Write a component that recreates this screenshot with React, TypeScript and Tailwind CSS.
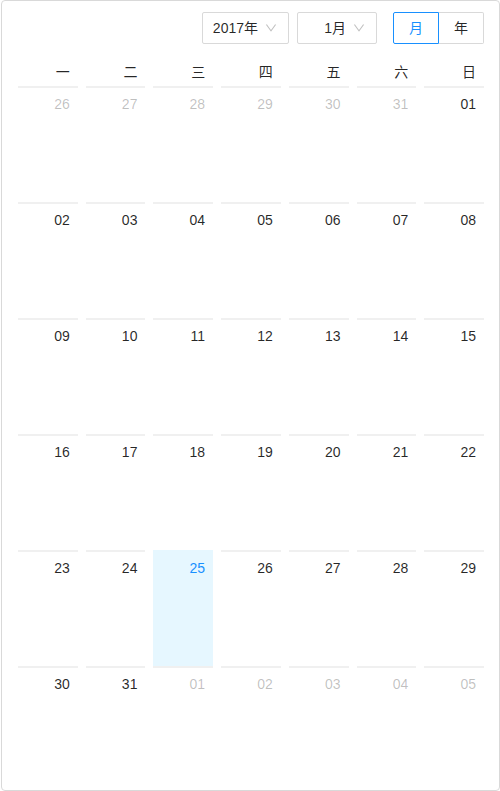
import React from 'react';

const weekdays = ['一', '二', '三', '四', '五', '六', '日'];

type Day = { label: string; inMonth: boolean; selected?: boolean };

function buildDays(): Day[] {
  const days: Day[] = [];
  for (let d = 26; d <= 31; d++) days.push({ label: String(d), inMonth: false });
  for (let d = 1; d <= 31; d++)
    days.push({ label: String(d).padStart(2, '0'), inMonth: true, selected: d === 25 });
  for (let d = 1; d <= 5; d++) days.push({ label: String(d).padStart(2, '0'), inMonth: false });
  return days;
}

function Chevron() {
  return (
    <svg viewBox="64 64 896 896" className="w-3 h-3" fill="rgba(0,0,0,0.25)">
      <path d="M884 256h-75c-5.1 0-9.9 2.5-12.9 6.6L512 654.2 227.9 262.6c-3-4.1-7.8-6.6-12.9-6.6h-75c-6.5 0-10.3 7.4-6.5 12.7l352.6 486.1c12.8 17.6 39 17.6 51.7 0l352.6-486.1c3.9-5.3.1-12.7-6.4-12.7z" />
    </svg>
  );
}

function Select({ value, width }: { value: string; width: string }) {
  return (
    <div
      className={`${width} h-8 border border-[#d9d9d9] rounded-[2px] bg-white flex items-center justify-end gap-[7px] pr-[11px] text-[14px] text-[rgba(0,0,0,0.85)]`}
    >
      <span>{value}</span>
      <Chevron />
    </div>
  );
}

export default function App() {
  const days = buildDays();
  const rows = [0, 1, 2, 3, 4, 5].map((r) => days.slice(r * 7, r * 7 + 7));

  return (
    <div
      className="ml-px w-[499px] h-[791px] border border-[#d9d9d9] rounded-[4px] bg-white"
      style={{ fontFamily: '"Liberation Sans", "Noto Sans CJK SC", sans-serif' }}
    >
      {/* Header */}
      <div className="flex justify-end items-center pt-[11px] pb-[11px] pr-[15px]">
        <Select value="2017年" width="w-[87px]" />
        <div className="ml-2">
          <Select value="1月" width="w-[80px]" />
        </div>
        <div className="ml-4 flex h-8 text-[14px]">
          <div className="w-[46px] flex items-center justify-center border border-[#1890ff] text-[#1890ff] rounded-l-[2px]">
            月
          </div>
          <div className="w-[45px] flex items-center justify-center border border-l-0 border-[#d9d9d9] text-[rgba(0,0,0,0.85)] rounded-r-[2px]">
            年
          </div>
        </div>
      </div>

      {/* Body */}
      <div className="pt-2 pl-3">
        <div className="w-[474px]">
          <div className="grid grid-cols-7">
            {weekdays.map((w) => (
              <div
                key={w}
                className="text-right pr-3 pb-[5px] leading-[18px] text-[14px] text-[rgba(0,0,0,0.85)]"
              >
                {w}
              </div>
            ))}
          </div>
          {rows.map((row, i) => (
            <div key={i} className="grid grid-cols-7">
              {row.map((d, j) => (
                <div key={j} className="px-1">
                  <div
                    className={`h-[116px] border-t-2 pt-1 px-2 text-right ${
                      d.selected ? 'bg-[#e6f7ff] border-[#e6f7ff]' : 'border-[#f0f0f0]'
                    }`}
                  >
                    <div
                      className={`leading-6 text-[14px] ${
                        d.selected
                          ? 'text-[#1890ff]'
                          : d.inMonth
                          ? 'text-[rgba(0,0,0,0.85)]'
                          : 'text-[rgba(0,0,0,0.25)]'
                      }`}
                    >
                      {d.label}
                    </div>
                  </div>
                </div>
              ))}
            </div>
          ))}
        </div>
      </div>
    </div>
  );
}
